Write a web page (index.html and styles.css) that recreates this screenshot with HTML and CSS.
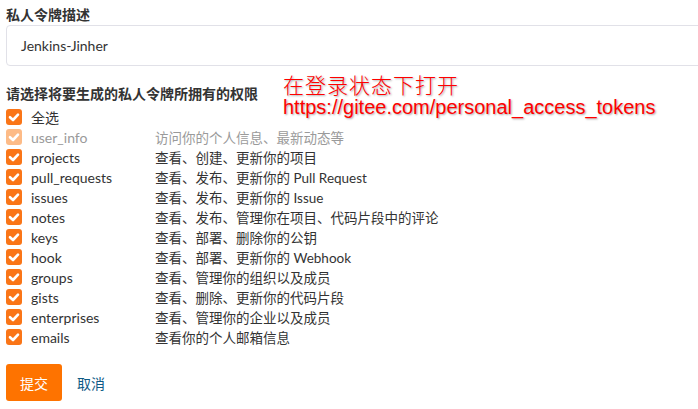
FILE: index.html
```html
<!DOCTYPE html>
<html lang="zh-CN">
<head>
<meta charset="utf-8">
<title>私人令牌</title>
<link rel="stylesheet" href="styles.css">
</head>
<body>
<div class="page">
  <div class="field-label">私人令牌描述</div>
  <div class="input">Jenkins-Jinher</div>

  <div class="section-label">请选择将要生成的私人令牌所拥有的权限</div>
  <div class="perm-list">
    <div class="perm"><span class="cb"><svg viewBox="0 0 16 16"><path d="M4 8.2l3 2.8 5-5.4"/></svg></span><span class="name">全选</span></div>
    <div class="perm disabled"><span class="cb"><svg viewBox="0 0 16 16"><path d="M4 8.2l3 2.8 5-5.4"/></svg></span><span class="name">user_info</span><span class="desc">访问你的个人信息、最新动态等</span></div>
    <div class="perm"><span class="cb"><svg viewBox="0 0 16 16"><path d="M4 8.2l3 2.8 5-5.4"/></svg></span><span class="name">projects</span><span class="desc">查看、创建、更新你的项目</span></div>
    <div class="perm"><span class="cb"><svg viewBox="0 0 16 16"><path d="M4 8.2l3 2.8 5-5.4"/></svg></span><span class="name">pull_requests</span><span class="desc">查看、发布、更新你的 Pull Request</span></div>
    <div class="perm"><span class="cb"><svg viewBox="0 0 16 16"><path d="M4 8.2l3 2.8 5-5.4"/></svg></span><span class="name">issues</span><span class="desc">查看、发布、更新你的 Issue</span></div>
    <div class="perm"><span class="cb"><svg viewBox="0 0 16 16"><path d="M4 8.2l3 2.8 5-5.4"/></svg></span><span class="name">notes</span><span class="desc">查看、发布、管理你在项目、代码片段中的评论</span></div>
    <div class="perm"><span class="cb"><svg viewBox="0 0 16 16"><path d="M4 8.2l3 2.8 5-5.4"/></svg></span><span class="name">keys</span><span class="desc">查看、部署、删除你的公钥</span></div>
    <div class="perm"><span class="cb"><svg viewBox="0 0 16 16"><path d="M4 8.2l3 2.8 5-5.4"/></svg></span><span class="name">hook</span><span class="desc">查看、部署、更新你的 Webhook</span></div>
    <div class="perm"><span class="cb"><svg viewBox="0 0 16 16"><path d="M4 8.2l3 2.8 5-5.4"/></svg></span><span class="name">groups</span><span class="desc">查看、管理你的组织以及成员</span></div>
    <div class="perm"><span class="cb"><svg viewBox="0 0 16 16"><path d="M4 8.2l3 2.8 5-5.4"/></svg></span><span class="name">gists</span><span class="desc">查看、删除、更新你的代码片段</span></div>
    <div class="perm"><span class="cb"><svg viewBox="0 0 16 16"><path d="M4 8.2l3 2.8 5-5.4"/></svg></span><span class="name">enterprises</span><span class="desc">查看、管理你的企业以及成员</span></div>
    <div class="perm"><span class="cb"><svg viewBox="0 0 16 16"><path d="M4 8.2l3 2.8 5-5.4"/></svg></span><span class="name">emails</span><span class="desc">查看你的个人邮箱信息</span></div>
  </div>

  <div class="actions">
    <button class="btn-submit">提交</button>
    <a class="btn-cancel">取消</a>
  </div>

  <div class="note">
    <div class="note-cn">在登录状态下打开</div>
    <div class="note-url">https://gitee.com/personal_access_tokens</div>
  </div>
</div>
</body>
</html>
```

FILE: styles.css
```css
html, body {
  margin: 0;
  padding: 0;
  background: #fff;
}
body {
  font-family: "Lato", "Noto Sans CJK SC", sans-serif;
  color: #333;
  font-size: 14px;
}
.page {
  position: relative;
  padding: 6px 0 0 6px;
  width: 760px;
  overflow: hidden;
}
.field-label,
.section-label {
  font-family: "Noto Sans CJK SC", sans-serif;
  font-weight: bold;
  font-size: 14px;
  line-height: 16px;
  color: #333;
}
.input {
  margin-top: 3px;
  height: 39px;
  border: 1px solid #e1e1e8;
  border-radius: 4px;
  padding-left: 14px;
  line-height: 39px;
  font-size: 14px;
  color: #333;
  box-sizing: content-box;
}
.section-label {
  margin-top: 19px;
}
.perm-list {
  margin-top: 6px;
  display: flex;
  flex-direction: column;
}
.perm {
  display: flex;
  align-items: center;
  height: 20px;
  font-size: 14px;
  color: #333;
}
.cb {
  width: 16px;
  height: 16px;
  border-radius: 3px;
  background: #fa7517;
  margin-right: 9px;
  display: flex;
  flex: none;
}
.cb svg {
  width: 16px;
  height: 16px;
  fill: none;
  stroke: #fff;
  stroke-width: 2.6;
  stroke-linecap: round;
  stroke-linejoin: round;
}
.name {
  width: 124px;
  flex: none;
  white-space: nowrap;
}
.desc {
  white-space: nowrap;
  font-size: 13.5px;
}
.perm.disabled {
  color: #9a9a9a;
}
.perm.disabled .cb {
  background: #fdbb87;
}
.actions {
  margin-top: 17px;
  display: flex;
  align-items: center;
}
.btn-submit {
  width: 56px;
  height: 37px;
  border: none;
  border-radius: 3px;
  background: #fe7300;
  color: #fff;
  font-family: "Noto Sans CJK SC", sans-serif;
  font-size: 14px;
  padding: 0;
}
.btn-cancel {
  margin-left: 15px;
  color: #0e5a85;
  font-size: 14px;
}
.note {
  position: absolute;
  left: 283px;
  top: 73px;
  color: #ff0000;
  text-shadow: 1px 1px 2px rgba(0, 0, 0, 0.35);
}
.note-cn {
  font-family: "Noto Sans CJK SC", sans-serif;
  font-weight: 300;
  font-size: 21px;
  line-height: 22px;
  letter-spacing: 1px;
}
.note-url {
  margin-top: 2px;
  font-family: "Liberation Sans", Arial, sans-serif;
  font-size: 20px;
  line-height: 20px;
}
```
